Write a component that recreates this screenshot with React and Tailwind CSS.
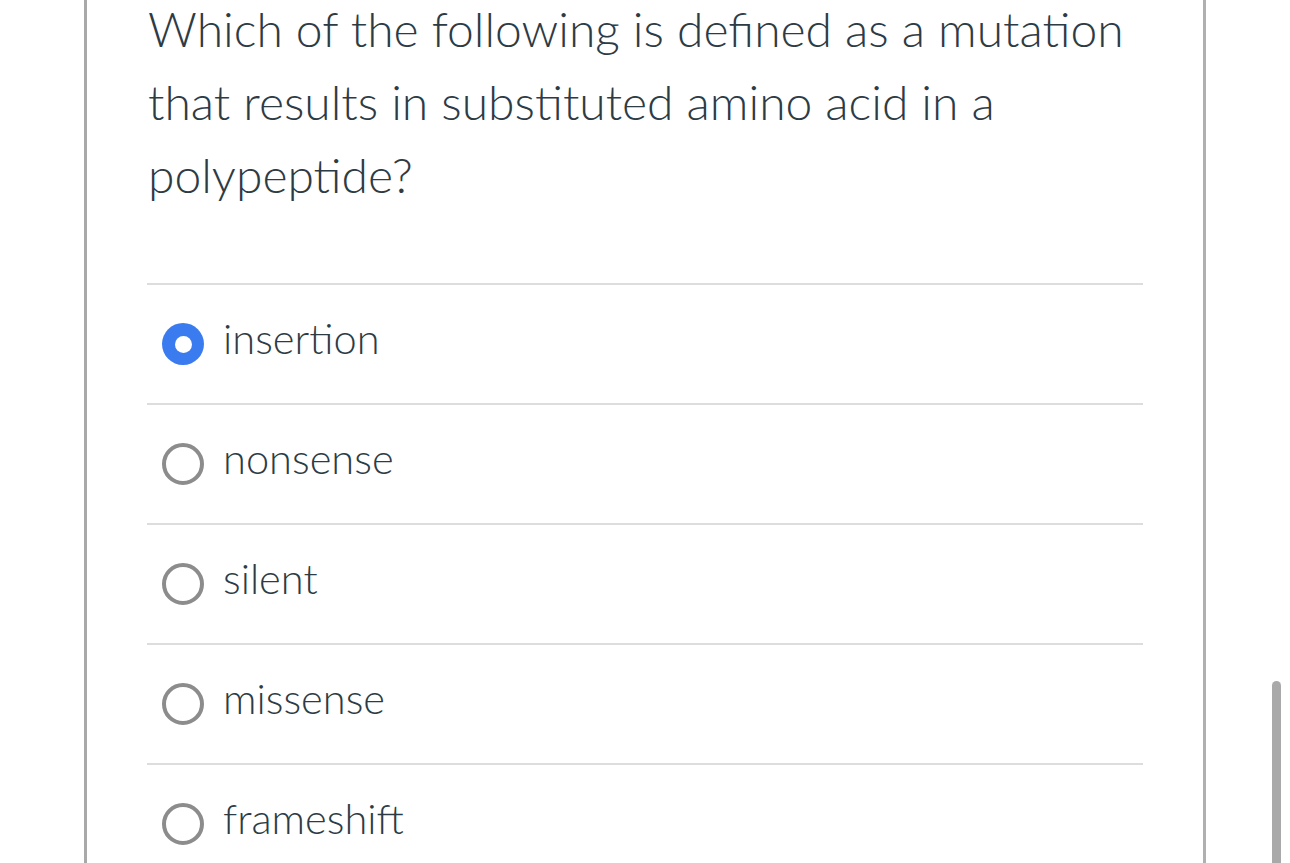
import React from "react";

const options = [
  { label: "insertion", selected: true },
  { label: "nonsense" },
  { label: "silent" },
  { label: "missense" },
  { label: "frameshift" },
];

function Radio({ selected }) {
  if (selected) {
    return (
      <span className="flex h-[42px] w-[42px] shrink-0 items-center justify-center rounded-full bg-[#3b7bf0]">
        <span className="h-[17px] w-[17px] rounded-full bg-white" />
      </span>
    );
  }
  return (
    <span className="h-[42px] w-[42px] shrink-0 rounded-full border-[4px] border-[#8c8c8c] bg-white" />
  );
}

export default function App() {
  return (
    <div
      className="relative h-[863px] w-[1290px] overflow-hidden bg-white text-[#2d3b45]"
      style={{ fontFamily: "Lato, 'Noto Sans', sans-serif" }}
    >
      <div className="ml-[84px] flex h-[863px] w-[1122px] flex-col border-x-[3px] border-l-[#a9a9a9] border-r-[#b0b0b0] pl-[61px] pr-[60px]">
        <p className="mt-[-8px] text-[48px] leading-[73px] font-light">
          Which of the following is defined as a mutation that results in substituted amino acid in a polypeptide?
        </p>
        <div className="mt-[72px] ml-[-1px]">
          {options.map((o) => (
            <div
              key={o.label}
              className="flex h-[120px] items-center gap-[19px] border-t-2 border-[#dddddd] pl-[15px]"
            >
              <Radio selected={o.selected} />
              <span className="pb-[11px] text-[41.6px] font-light leading-none">{o.label}</span>
            </div>
          ))}
        </div>
      </div>
      <div className="absolute left-[1272px] top-[681px] h-[220px] w-[9px] rounded-full bg-[#a9a9a9]" />
    </div>
  );
}
